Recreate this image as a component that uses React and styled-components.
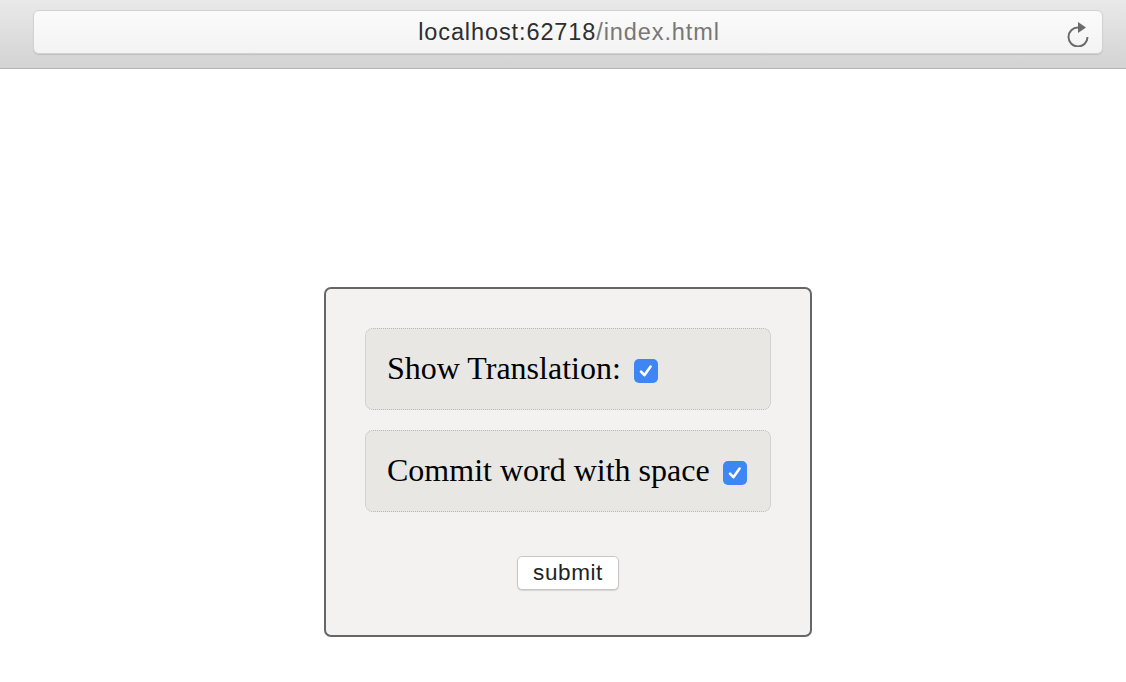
import React, { useState } from "react";
import styled, { createGlobalStyle } from "styled-components";

const GlobalStyle = createGlobalStyle`
  html, body {
    margin: 0;
    padding: 0;
    background: #ffffff;
  }
  body {
    font-family: "Liberation Serif", "Times New Roman", serif;
  }
`;

const Window = styled("div")`
  width: 1126px;
  height: 682px;
  display: flex;
  flex-direction: column;
  overflow: hidden;
`;

const Toolbar = styled("header")`
  height: 69px;
  flex-shrink: 0;
  box-sizing: border-box;
  padding: 10px 23px 0 33px;
  background: linear-gradient(#e9e9e9, #d3d3d3);
  border-bottom: 1px solid #b4b4b4;
`;

const AddressBar = styled("div")`
  position: relative;
  height: 44px;
  box-sizing: border-box;
  display: flex;
  align-items: center;
  justify-content: center;
  padding-left: 2px;
  background: linear-gradient(#fbfbfb, #f3f3f3);
  border: 1px solid #d2d2d2;
  border-radius: 6px;
  box-shadow: 0 1px 1px rgba(0, 0, 0, 0.12);
  font-family: "Liberation Sans", Arial, sans-serif;
  font-size: 23.5px;
  letter-spacing: 0.9px;
`;

const Host = styled("span")`
  color: #2e2e2e;
`;

const Path = styled("span")`
  color: #777777;
`;

const Reload = styled("svg")`
  position: absolute;
  right: 11px;
  top: 8px;
`;

const Page = styled("main")`
  flex: 1;
  display: flex;
  justify-content: center;
  align-items: flex-start;
  padding: 218px 0 0 10px;
`;

const Card = styled("form")`
  width: 488px;
  box-sizing: border-box;
  padding: 39px 39px 45px;
  background: #f3f2f0;
  border: 2px solid #666666;
  border-radius: 7px;
  display: flex;
  flex-direction: column;
  gap: 20px;
`;

const Row = styled("label")`
  height: 82px;
  box-sizing: border-box;
  display: flex;
  align-items: center;
  padding: 0 21px;
  background: #e8e7e4;
  border: 1px dotted #b9b9b9;
  border-radius: 8px;
  font-size: 32px;
  color: #000;
  cursor: pointer;
`;

const LabelText = styled("span")`
  margin-right: 13px;
  line-height: 1;
  position: relative;
  top: -1px;
`;

const HiddenInput = styled("input")`
  display: none;
`;

const Box = styled("span")`
  width: 24px;
  height: 24px;
  border-radius: 5px;
  background: ${(p) => (p.checked ? "#3f86f5" : "#ffffff")};
  border: ${(p) => (p.checked ? "none" : "1px solid #999")};
  box-sizing: border-box;
  display: inline-flex;
  align-items: center;
  justify-content: center;
  position: relative;
  top: 2px;
`;

const Actions = styled("div")`
  display: flex;
  justify-content: center;
  padding-top: 24px;
`;

const SubmitButton = styled("button")`
  width: 102px;
  height: 34px;
  background: #ffffff;
  border: 1px solid #c6c6c6;
  border-radius: 5px;
  box-shadow: 0 1px 1px rgba(0, 0, 0, 0.12);
  font-family: "Liberation Sans", Arial, sans-serif;
  font-size: 22.5px;
  letter-spacing: 0.6px;
  color: #222;
  padding: 0;
  cursor: pointer;
`;

function Checkbox({ checked, onChange }) {
  return (
    <>
      <HiddenInput type="checkbox" checked={checked} onChange={onChange} />
      <Box checked={checked}>
        {checked && (
          <svg width="18" height="18" viewBox="0 0 18 18">
            <path
              d="M4 9.6 L7.4 13.2 L13.6 4.6"
              fill="none"
              stroke="#fff"
              strokeWidth="2.6"
              strokeLinecap="round"
              strokeLinejoin="round"
            />
          </svg>
        )}
      </Box>
    </>
  );
}

function App() {
  const [showTranslation, setShowTranslation] = useState(true);
  const [commitWithSpace, setCommitWithSpace] = useState(true);

  return (
    <Window>
      <GlobalStyle />
      <Toolbar>
        <AddressBar>
          <Host>localhost:62718</Host>
          <Path>/index.html</Path>
          <Reload width="26" height="28" viewBox="0 0 26 28">
            <path
              d="M13 8.5 A9.5 9.5 0 1 0 22.5 18"
              fill="none"
              stroke="#6b6b6b"
              strokeWidth="2"
            />
            <path d="M13 3 L21 8.5 L13 14 Z" fill="#6b6b6b" />
          </Reload>
        </AddressBar>
      </Toolbar>
      <Page>
        <Card onSubmit={(e) => e.preventDefault()}>
          <Row>
            <LabelText>Show Translation:</LabelText>
            <Checkbox
              checked={showTranslation}
              onChange={() => setShowTranslation(!showTranslation)}
            />
          </Row>
          <Row>
            <LabelText>Commit word with space</LabelText>
            <Checkbox
              checked={commitWithSpace}
              onChange={() => setCommitWithSpace(!commitWithSpace)}
            />
          </Row>
          <Actions>
            <SubmitButton type="submit">submit</SubmitButton>
          </Actions>
        </Card>
      </Page>
    </Window>
  );
}

export default App;
